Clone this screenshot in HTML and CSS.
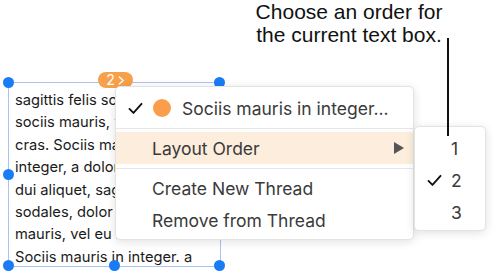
FILE: index.html
```html
<!DOCTYPE html>
<html>
<head>
<meta charset="utf-8">
<link rel="stylesheet" href="styles.css">
</head>
<body>
<div class="canvas">
  <div class="callout">
    <p class="callout-text">Choose an order for<br>the current text box.</p>
  </div>
  <div class="callout-line"></div>

  <div class="textbox">
    <div class="textbox-body">
      <div class="tline">sagittis felis sociis mauris in</div>
      <div class="tline">sociis mauris, vel eu libero</div>
      <div class="tline">cras. Sociis mauris in</div>
      <div class="tline">integer, a dolor netus non</div>
      <div class="tline">dui aliquet, sagittis felis</div>
      <div class="tline">sodales, dolor sociis</div>
      <div class="tline">mauris, vel eu libero cras.</div>
      <div class="tline">Sociis mauris in integer. a</div>
    </div>
    <span class="handle h-tl"></span>
    <span class="handle h-tr"></span>
    <span class="handle h-ml"></span>
    <span class="handle h-bl"></span>
    <span class="handle h-bm"></span>
    <span class="handle h-br"></span>
    <span class="badge">2<svg class="badge-chev" viewBox="0 0 8 10" width="7" height="9"><path d="M1.5 1 L6 5 L1.5 9" fill="none" stroke="#fff" stroke-width="1.6" stroke-linecap="round" stroke-linejoin="round"/></svg></span>
  </div>

  <div class="menu">
    <div class="menu-item first">
      <svg class="check" viewBox="0 0 16 14" width="15" height="13"><path d="M1.5 7.5 L5.8 11.8 L14.5 2" fill="none" stroke="#111" stroke-width="2" stroke-linecap="round" stroke-linejoin="round"/></svg>
      <span class="dot"></span>
      <span class="label">Sociis mauris in integer...</span>
    </div>
    <div class="sep"></div>
    <div class="menu-item hl">
      <span class="label indent">Layout Order</span>
      <svg class="tri" viewBox="0 0 10 12" width="10" height="12"><path d="M0 0 L10 6 L0 12 Z" fill="#555"/></svg>
    </div>
    <div class="sep"></div>
    <div class="menu-item"><span class="label indent">Create New Thread</span></div>
    <div class="menu-item"><span class="label indent">Remove from Thread</span></div>
  </div>

  <div class="submenu">
    <div class="sub-item"><span class="num">1</span></div>
    <div class="sub-item">
      <svg class="subcheck" viewBox="0 0 16 14" width="15" height="13"><path d="M1.5 7.5 L5.8 11.8 L14.5 2" fill="none" stroke="#111" stroke-width="2" stroke-linecap="round" stroke-linejoin="round"/></svg>
      <span class="num">2</span>
    </div>
    <div class="sub-item"><span class="num">3</span></div>
  </div>
</div>
</body>
</html>
```

FILE: styles.css
```css
html, body {
  margin: 0;
  padding: 0;
  background: #ffffff;
}
.canvas {
  position: relative;
  width: 504px;
  height: 276px;
  overflow: hidden;
  font-family: Inter, "Noto Sans", sans-serif;
}
.callout {
  position: absolute;
  left: 239px;
  top: 0;
  width: 220px;
}
.callout-text {
  margin: 0;
  font-family: "Liberation Sans", Arial, sans-serif;
  font-size: 21px;
  line-height: 23px;
  color: #111;
  text-align: center;
}
.callout-line {
  position: absolute;
  left: 447px;
  top: 38px;
  width: 1.5px;
  height: 98px;
  background: #111;
  z-index: 5;
}
.textbox {
  position: absolute;
  left: 8px;
  top: 82px;
  width: 211px;
  height: 183px;
  border: 1px solid #a9c4f2;
}
.textbox-body {
  height: 100%;
  overflow: hidden;
  box-sizing: border-box;
  padding: 6px 4px 0 6px;
  font-size: 14.7px;
  line-height: 22.4px;
  color: #1a1a1a;
}
.tline {
  white-space: nowrap;
}
.handle {
  position: absolute;
  width: 11px;
  height: 11px;
  border-radius: 50%;
  background: #1a7cf5;
  margin: -6px 0 0 -6px;
}
.h-tl { left: 0; top: 0; }
.h-tr { left: 100%; top: 0; }
.h-ml { left: 0; top: 50%; }
.h-bl { left: 0; top: 100%; }
.h-bm { left: 50%; top: 100%; }
.h-br { left: 100%; top: 100%; }
.badge {
  position: absolute;
  left: 89px;
  top: -11px;
  width: 35px;
  height: 16px;
  border-radius: 8px;
  background: #f7a04b;
  color: #fff;
  font-size: 14px;
  line-height: 16px;
  display: flex;
  align-items: center;
  justify-content: center;
  gap: 3px;
}
.badge-chev { display: block; }
.menu {
  position: absolute;
  left: 115px;
  top: 86px;
  width: 299px;
  box-sizing: border-box;
  padding: 5px 0 3px;
  background: #fff;
  border: 1px solid #e3e3e3;
  border-radius: 5px;
  box-shadow: 0 2px 10px rgba(0,0,0,0.12);
  z-index: 2;
}
.menu-item {
  height: 32px;
  display: flex;
  align-items: center;
  font-size: 17.5px;
  color: #3a3a3a;
  position: relative;
}
.menu-item.hl {
  background: #fdeddc;
}
.check {
  margin-left: 12px;
  display: block;
}
.dot {
  width: 18px;
  height: 18px;
  border-radius: 50%;
  background: #fb9e4b;
  margin-left: 10px;
}
.first .label {
  margin-left: 11px;
}
.indent {
  margin-left: 36px;
}
.tri {
  position: absolute;
  right: 9px;
  top: 10px;
}
.sep {
  height: 1px;
  background: #e6e6e6;
  margin: 4px 0 3px;
}
.submenu {
  position: absolute;
  left: 414px;
  top: 126px;
  width: 72px;
  height: 105px;
  box-sizing: border-box;
  padding: 5px 0;
  background: #fff;
  border: 1px solid #e3e3e3;
  border-radius: 5px;
  box-shadow: 0 2px 10px rgba(0,0,0,0.12);
  z-index: 3;
}
.sub-item {
  height: 32px;
  position: relative;
  display: flex;
  align-items: center;
  font-size: 17.5px;
  color: #3a3a3a;
}
.num {
  position: absolute;
  left: 36px;
}
.subcheck {
  position: absolute;
  left: 12px;
  top: 10px;
}
```
